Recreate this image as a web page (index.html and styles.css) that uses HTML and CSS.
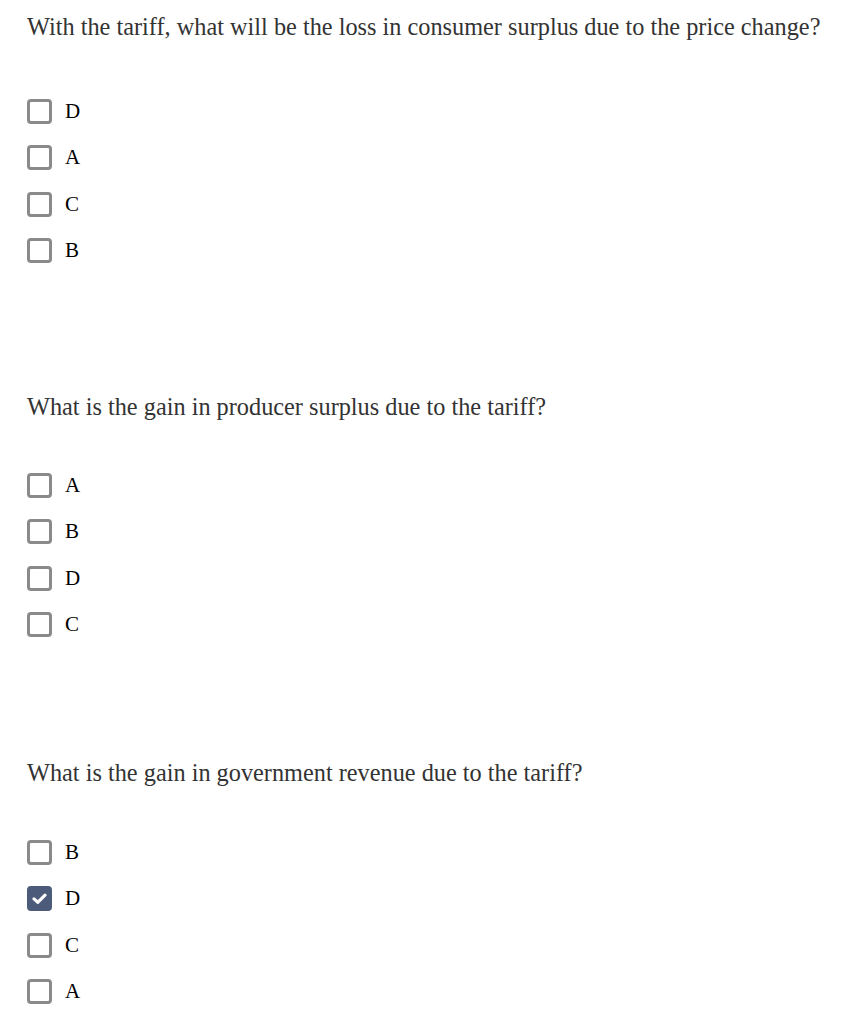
FILE: index.html
```html
<!DOCTYPE html>
<html>
<head>
<meta charset="utf-8">
<link rel="stylesheet" href="styles.css">
</head>
<body>
<div class="page">
  <section class="question q1">
    <p class="prompt">With the tariff, what will be the loss in consumer surplus due to the price change?</p>
    <ul class="options">
      <li class="option"><span class="box"></span><span class="label">D</span></li>
      <li class="option"><span class="box"></span><span class="label">A</span></li>
      <li class="option"><span class="box"></span><span class="label">C</span></li>
      <li class="option"><span class="box"></span><span class="label">B</span></li>
    </ul>
  </section>
  <section class="question q2">
    <p class="prompt">What is the gain in producer surplus due to the tariff?</p>
    <ul class="options">
      <li class="option"><span class="box"></span><span class="label">A</span></li>
      <li class="option"><span class="box"></span><span class="label">B</span></li>
      <li class="option"><span class="box"></span><span class="label">D</span></li>
      <li class="option"><span class="box"></span><span class="label">C</span></li>
    </ul>
  </section>
  <section class="question q3">
    <p class="prompt">What is the gain in government revenue due to the tariff?</p>
    <ul class="options">
      <li class="option"><span class="box"></span><span class="label">B</span></li>
      <li class="option"><span class="box checked"><svg viewBox="0 0 24 24" width="21" height="21"><path d="M5 12.5 L9.8 16.8 L19 7.8" fill="none" stroke="#fff" stroke-width="4" stroke-linecap="round" stroke-linejoin="round"/></svg></span><span class="label">D</span></li>
      <li class="option"><span class="box"></span><span class="label">C</span></li>
      <li class="option"><span class="box"></span><span class="label">A</span></li>
    </ul>
  </section>
</div>
</body>
</html>
```
FILE: styles.css
```css
html, body {
  margin: 0;
  padding: 0;
  background: #fff;
}
.page {
  padding: 12px 0 0 27px;
  font-family: "Liberation Serif", "Times New Roman", serif;
}
.question {
  margin: 0;
}
.q1 {
  margin-bottom: 129px;
}
.q2 {
  margin-bottom: 121px;
}
.prompt {
  margin: 0;
  font-size: 24.3px;
  line-height: 30px;
  color: #333;
}
.options {
  list-style: none;
  margin: 50.5px 0 0 0;
  padding: 0;
  display: flex;
  flex-direction: column;
  gap: 21.5px;
}
.q1 .options {
  margin-top: 56.5px;
}
.q3 .options {
  margin-top: 51.5px;
}
.option {
  display: flex;
  align-items: center;
  gap: 13px;
  height: 25px;
}
.box {
  box-sizing: border-box;
  flex: none;
  width: 25px;
  height: 25px;
  border: 3px solid #8a8a8a;
  border-radius: 4px;
  display: flex;
  align-items: center;
  justify-content: center;
}
.box.checked {
  background: #4b5b79;
  border-color: #4b5b79;
}
.label {
  font-size: 21px;
  color: #000;
}
```
